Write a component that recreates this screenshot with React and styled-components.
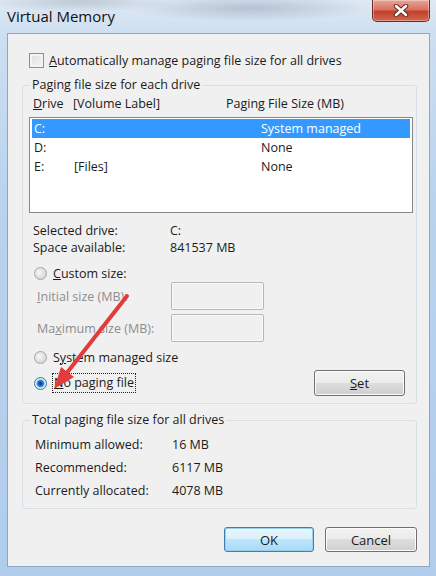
import styled, {createGlobalStyle} from 'styled-components'

const GlobalStyle = createGlobalStyle`
  html, body {
    margin: 0;
    padding: 0;
  }
  body {
    font-family: "Open Sans", "Noto Sans", sans-serif;
    font-size: 12.5px;
    color: #1b1b1b;
  }
`

const Window = styled.div`
  position: relative;
  width: 436px;
  height: 576px;
  display: flex;
  flex-direction: column;
  overflow: hidden;
  background:
    radial-gradient(ellipse 120px 14px at 250px 8px, rgba(150, 165, 185, 0.55), transparent),
    radial-gradient(ellipse 90px 10px at 80px 2px, rgba(160, 170, 185, 0.5), transparent),
    linear-gradient(180deg, #dfe8f3 0, #cddff1 34px, #b9d3ee 200px, #b0cdec 100%);
`

const TitleBar = styled.div`
  height: 33px;
  display: flex;
  align-items: flex-start;
  padding-left: 7px;
`

const Title = styled.span`
  font-size: 15px;
  line-height: 20px;
  padding-top: 6px;
  color: #111;
`

const CloseButton = styled.div`
  margin-left: auto;
  margin-right: 6px;
  width: 56px;
  height: 21px;
  border: 1px solid #6d2b24;
  border-top: none;
  border-radius: 0 0 5px 5px;
  background: linear-gradient(180deg, #e8a596 0, #d9735f 45%, #c1402c 55%, #d4664e 100%);
  display: flex;
  align-items: center;
  justify-content: center;
  box-shadow: inset 0 0 0 1px rgba(255, 255, 255, 0.35);
`

const Body = styled.div`
  flex: 1;
  margin: 0 6px 9px 7px;
  background: #f0f0f0;
  border: 1px solid #8ea6c2;
  padding: 0 12px 0 14px;
  display: flex;
  flex-direction: column;
`

const CheckRow = styled.label`
  display: flex;
  align-items: center;
  height: 16px;
  margin: 18px 0 0 7px;
  gap: 5px;
`

const CheckBox = styled.span`
  width: 13px;
  height: 13px;
  border: 1px solid #8e8f8f;
  background: linear-gradient(135deg, #dcdcdc, #f6f6f6);
  box-shadow: inset 0 0 0 2px #f4f4f4;
`

const Group = styled.fieldset`
  margin: ${p => p.$top}px 0 0 0;
  padding: ${p => p.$pad};
  border: 1px solid #d5dfe5;
  border-radius: 3px;
  display: flex;
  flex-direction: column;
`

const Legend = styled.legend`
  padding: 0 2px;
  margin-left: 1px;
  line-height: 18px;
`

const HeaderRow = styled.div`
  display: grid;
  grid-template-columns: 40px 153px 1fr;
  line-height: 18px;
  margin-top: 1px;
  padding-left: 4px;
`

const ListBox = styled.div`
  margin-top: 4px;
  height: 96px;
  box-sizing: border-box;
  border: 1px solid #828790;
  background: #fff;
  padding: 1px 2px;
`

const ListRow = styled.div`
  display: grid;
  grid-template-columns: 40px 187px 1fr;
  height: 19px;
  line-height: 19px;
  padding-left: 2px;
  background: ${p => (p.$selected ? '#3399ff' : 'transparent')};
  color: ${p => (p.$selected ? '#fff' : '#1b1b1b')};
`

const InfoRow = styled.div`
  display: grid;
  grid-template-columns: 137px 1fr;
  line-height: 17px;
  padding-left: 4px;
  margin-top: ${p => p.$top || 0}px;
`

const RadioRow = styled.div`
  display: flex;
  align-items: center;
  gap: 6px;
  height: ${p => p.$h || 18}px;
  margin-top: ${p => p.$top}px;
  padding-left: 5px;
`

const Radio = styled.span`
  width: 11px;
  height: 11px;
  border-radius: 50%;
  border: 1px solid ${p => (p.$checked ? '#3c74a8' : '#a5a5a5')};
  background: ${p =>
    p.$checked
      ? 'radial-gradient(circle, #0d3d6e 0, #1f6cb5 2.5px, #5aa7e6 3.5px, #d6ebfa 4.5px, #f2f8fd 100%)'
      : 'radial-gradient(circle at 40% 40%, #f7f7f7 0, #d8d8d8 70%, #cfcfcf 100%)'};
  flex-shrink: 0;
`

const FocusText = styled.span`
  outline: 1px dotted #222;
  padding: 0 1px;
  margin-left: 6px;
  line-height: 18px;
`

const FieldRow = styled.div`
  display: flex;
  align-items: center;
  margin-top: ${p => p.$top}px;
  padding-left: 8px;
`

const FieldLabel = styled.span`
  width: 134px;
  color: #8d8d8d;
`

const FieldInput = styled.div`
  width: 93px;
  height: 28px;
  box-sizing: border-box;
  border: 1px solid #b5b5b5;
  border-radius: 2px;
  background: #f0f0f0;
  box-shadow: inset 0 0 0 1px #fbfbfb;
`

const Button = styled.button`
  width: ${p => p.$w || 91}px;
  height: ${p => p.$h || 25}px;
  font: inherit;
  font-size: 13px;
  color: #1b1b1b;
  border: 1px solid ${p => (p.$primary ? '#3c7fb1' : '#707070')};
  border-radius: 3px;
  background: ${p =>
    p.$primary
      ? 'linear-gradient(180deg, #eaf6fd 0, #d9f0fc 50%, #bee6fd 50%, #a7d9f5 100%)'
      : 'linear-gradient(180deg, #f2f2f2 0, #ebebeb 50%, #dddddd 50%, #cfcfcf 100%)'};
  box-shadow: inset 0 0 0 1px ${p => (p.$primary ? '#98d1ef' : '#fcfcfc')};
  padding: 0;
`

const SetButton = styled(Button)`
  margin-left: auto;
  margin-right: 8px;
`

const SetRow = styled.div`
  display: flex;
  align-items: center;
  margin-top: 4px;
  height: 26px;
  padding-left: 5px;
`

const TotalRow = styled.div`
  display: grid;
  grid-template-columns: 137px 1fr;
  line-height: 23px;
  padding-left: 6px;
`

const ButtonBar = styled.div`
  display: flex;
  justify-content: flex-end;
  gap: 11px;
  margin-top: 18px;
`

const Overlay = styled.svg`
  position: absolute;
  left: 0;
  top: 0;
  pointer-events: none;
`

const drives = [
  {drive: 'C:', label: '', size: 'System managed', selected: true},
  {drive: 'D:', label: '', size: 'None'},
  {drive: 'E:', label: '[Files]', size: 'None'},
]

const totals = [
  ['Minimum allowed:', '16 MB'],
  ['Recommended:', '6117 MB'],
  ['Currently allocated:', '4078 MB'],
]

export default function App() {
  return (
    <>
      <GlobalStyle />
      <Window>
        <TitleBar>
          <Title>Virtual Memory</Title>
          <CloseButton>
            <svg width="16" height="13" viewBox="0 0 16 13">
              <path
                d="M3 2 L13 11 M13 2 L3 11"
                stroke="#5a2a24"
                strokeWidth="4.5"
                strokeLinecap="round"
              />
              <path
                d="M3 2 L13 11 M13 2 L3 11"
                stroke="#fff"
                strokeWidth="2.6"
                strokeLinecap="round"
              />
            </svg>
          </CloseButton>
        </TitleBar>
        <Body>
          <CheckRow>
            <CheckBox />
            <span>
              <u>A</u>utomatically manage paging file size for all drives
            </span>
          </CheckRow>

          <Group $top={8} $pad="0 3px 7px 6px">
            <Legend>Paging file size for each drive</Legend>
            <HeaderRow>
              <span>
                <u>D</u>rive
              </span>
              <span>[Volume Label]</span>
              <span>Paging File Size (MB)</span>
            </HeaderRow>
            <ListBox>
              {drives.map(d => (
                <ListRow key={d.drive} $selected={d.selected}>
                  <span>{d.drive}</span>
                  <span>{d.label}</span>
                  <span>{d.size}</span>
                </ListRow>
              ))}
            </ListBox>
            <InfoRow $top={9}>
              <span>Selected drive:</span>
              <span>C:</span>
            </InfoRow>
            <InfoRow>
              <span>Space available:</span>
              <span>841537 MB</span>
            </InfoRow>
            <RadioRow $top={9} $h={17}>
              <Radio />
              <span>
                <u>C</u>ustom size:
              </span>
            </RadioRow>
            <FieldRow $top={0}>
              <FieldLabel>
                <u>I</u>nitial size (MB):
              </FieldLabel>
              <FieldInput />
            </FieldRow>
            <FieldRow $top={4}>
              <FieldLabel>
                Ma<u>x</u>imum size (MB):
              </FieldLabel>
              <FieldInput />
            </FieldRow>
            <RadioRow $top={6}>
              <Radio />
              <span>
                S<u>y</u>stem managed size
              </span>
            </RadioRow>
            <SetRow>
              <Radio $checked />
              <FocusText>
                <u>N</u>o paging file
              </FocusText>
              <SetButton $w={91} $h={26}>
                <u>S</u>et
              </SetButton>
            </SetRow>
          </Group>

          <Group $top={7} $pad="4px 3px 6px 6px">
            <Legend>Total paging file size for all drives</Legend>
            {totals.map(([label, value]) => (
              <TotalRow key={label}>
                <span>{label}</span>
                <span>{value}</span>
              </TotalRow>
            ))}
          </Group>

          <ButtonBar>
            <Button $primary $w={90}>
              OK
            </Button>
            <Button $w={92}>Cancel</Button>
          </ButtonBar>
        </Body>
        <Overlay width="436" height="576" viewBox="0 0 436 576">
          <line
            x1="127"
            y1="296"
            x2="66"
            y2="374"
            stroke="#e23b3b"
            strokeWidth="4"
            strokeLinecap="round"
          />
          <polygon points="54,389 74,377 61,367" fill="#e23b3b" />
        </Overlay>
      </Window>
    </>
  )
}
